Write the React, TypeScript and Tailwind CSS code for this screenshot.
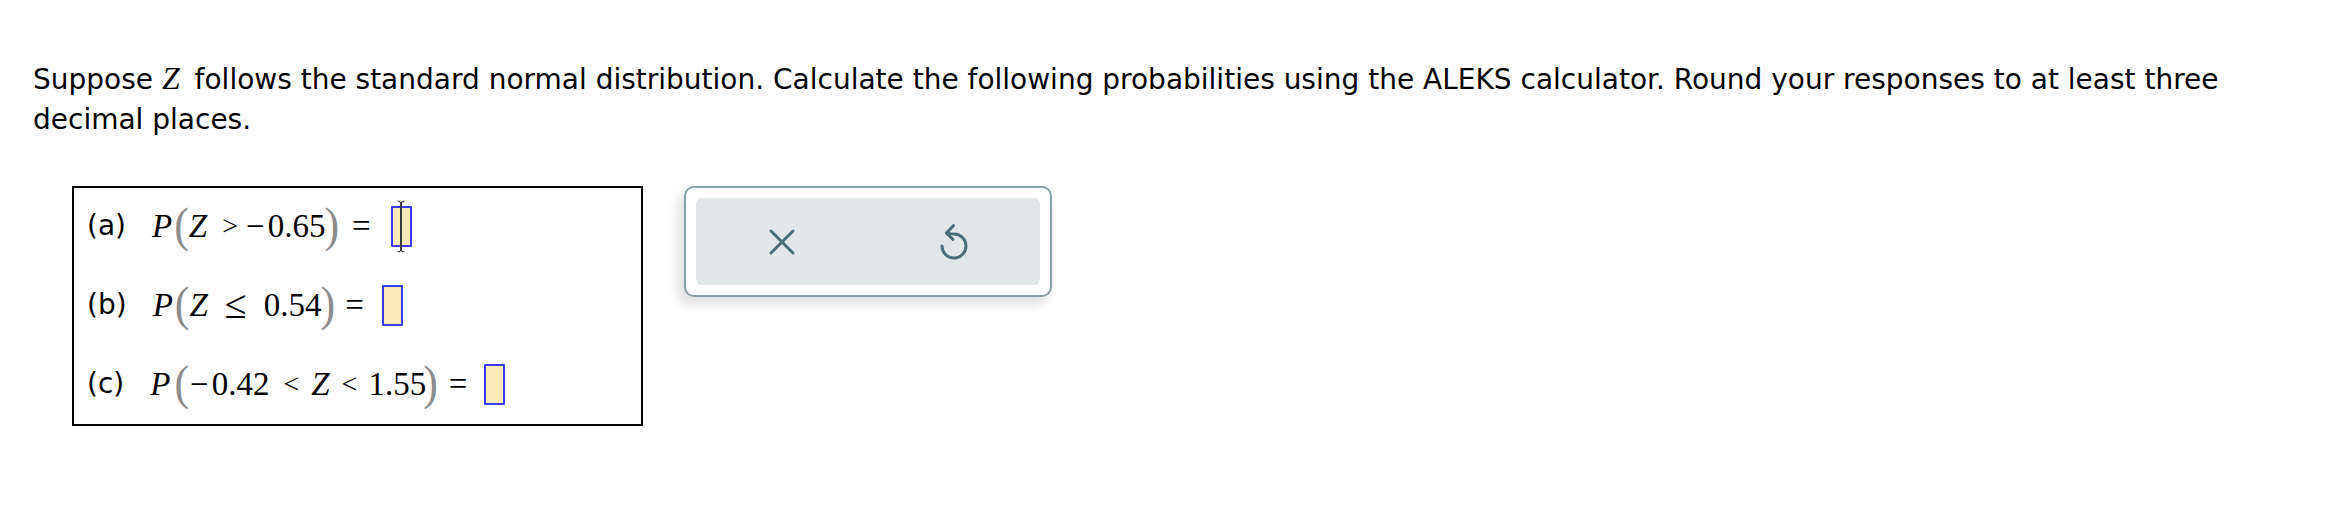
import React from "react"

const sans = { fontFamily: '"DejaVu Sans", Verdana, sans-serif' }
const serif = { fontFamily: '"Liberation Serif", "Times New Roman", serif' }

function Paren({ side, className = "" }: { side: "(" | ")"; className?: string }) {
  return (
    <span
      className={`text-[44px] leading-none text-[#8c8c8c] inline-block scale-y-[1.08] ${className}`}
      style={serif}
    >
      {side}
    </span>
  )
}

function Answer({ cursor = false, className = "" }: { cursor?: boolean; className?: string }) {
  return (
    <span
      className={`relative inline-block w-[21px] h-[41px] bg-[#fbebb6] border-2 border-[#3b3bf2] rounded-[1px] ${className}`}
    >
      {cursor && (
        <svg
          className="absolute left-[3.5px] top-[-8px]"
          width="10"
          height="53"
          viewBox="0 0 10 53"
          fill="none"
          stroke="#3a3a3a"
        >
          <path d="M5 3 V50" strokeWidth="2" />
          <path d="M1.5 1 C3 1 4.5 2 5 3 C5.5 2 7 1 8.5 1" strokeWidth="1.2" />
          <path d="M1.5 52 C3 52 4.5 51 5 50 C5.5 51 7 52 8.5 52" strokeWidth="1.2" />
        </svg>
      )}
    </span>
  )
}

function M({ children, className = "", italic = false }: { children: React.ReactNode; className?: string; italic?: boolean }) {
  return (
    <span className={`text-[33px] leading-none text-black ${italic ? "italic" : ""} ${className}`} style={serif}>
      {children}
    </span>
  )
}

function Rel({ children, className = "" }: { children: React.ReactNode; className?: string }) {
  return (
    <span className={`text-[28px] leading-none text-black ${className}`} style={serif}>
      {children}
    </span>
  )
}

function Label({ children }: { children: React.ReactNode }) {
  return (
    <span className="text-[28px] leading-none text-black" style={sans}>
      {children}
    </span>
  )
}

export default function App() {
  return (
    <div className="w-[2328px] h-[518px] bg-white px-[33px] pt-[60px]">
      <p className="text-[28px] leading-[40px] text-black" style={sans}>
        Suppose <span className="italic text-[32px] leading-none mr-[6px]" style={serif}>Z</span> follows the
        standard normal distribution. Calculate the following probabilities using the ALEKS calculator. Round
        your responses to at least three decimal places.
      </p>

      <div className="flex items-start mt-[46px] ml-[39px]">
        {/* problem box */}
        <div className="w-[571px] h-[240px] border-2 border-black flex flex-col justify-center gap-[35px] pb-[2px] pl-[13px]">
          <div className="flex items-center h-[44px]">
            <Label>(a)</Label>
            <M italic className="ml-[26px]">P</M>
            <Paren side="(" className="ml-[2px]" />
            <M italic className="ml-[0px]">Z</M>
            <Rel className="ml-[15px]">&gt;</Rel>
            <M className="ml-[8px]">−</M>
            <M className="ml-[3px]">0.65</M>
            <Paren side=")" className="ml-[-1px]" />
            <M className="ml-[13px]">=</M>
            <Answer cursor className="ml-[20px]" />
          </div>

          <div className="flex items-center h-[44px]">
            <Label>(b)</Label>
            <M italic className="ml-[26px]">P</M>
            <Paren side="(" className="ml-[2px]" />
            <M italic className="ml-[0px]">Z</M>
            <span className="text-[40px] leading-none ml-[17px]" style={serif}>
              ≤
            </span>
            <M className="ml-[17px]">0.54</M>
            <Paren side=")" className="ml-[-1px]" />
            <M className="ml-[10px]">=</M>
            <Answer className="ml-[18px]" />
          </div>

          <div className="flex items-center h-[44px]">
            <Label>(c)</Label>
            <M italic className="ml-[26px]">P</M>
            <Paren side="(" className="ml-[4px]" />
            <M className="ml-[1px]">−</M>
            <M className="ml-[3px]">0.42</M>
            <Rel className="ml-[14px]">&lt;</Rel>
            <M italic className="ml-[12px]">Z</M>
            <Rel className="ml-[12px]">&lt;</Rel>
            <M className="ml-[11px]">1.55</M>
            <Paren side=")" className="ml-[-3px]" />
            <M className="ml-[11px]">=</M>
            <Answer className="ml-[17px]" />
          </div>
        </div>

        {/* calculator buttons */}
        <div className="ml-[41px] w-[368px] h-[111px] rounded-[10px] border-2 border-[#8aa0a9] bg-white p-[10px] shadow-[-5px_7px_12px_rgba(0,0,0,0.14)]">
          <div className="w-full h-full rounded-[6px] bg-[#e1e6e9] grid grid-cols-2">
            <button className="flex items-center justify-center" aria-label="Clear">
              <svg width="28" height="28" viewBox="0 0 28 28" fill="none" stroke="#4b6c79" strokeWidth="3" strokeLinecap="round">
                <path d="M3 3 L25 25 M25 3 L3 25" />
              </svg>
            </button>
            <button className="flex items-center justify-center" aria-label="Undo">
              <svg width="32" height="40" viewBox="0 0 32 40" fill="none" stroke="#4b6c79" strokeWidth="3" strokeLinecap="round" strokeLinejoin="round">
                <path d="M15.5 3.5 L8.5 11 L15 17.5" />
                <path d="M9 11.2 C11.5 11.6 13.5 12 16 12 A12 12 0 1 1 4 24" />
              </svg>
            </button>
          </div>
        </div>
      </div>
    </div>
  )
}
